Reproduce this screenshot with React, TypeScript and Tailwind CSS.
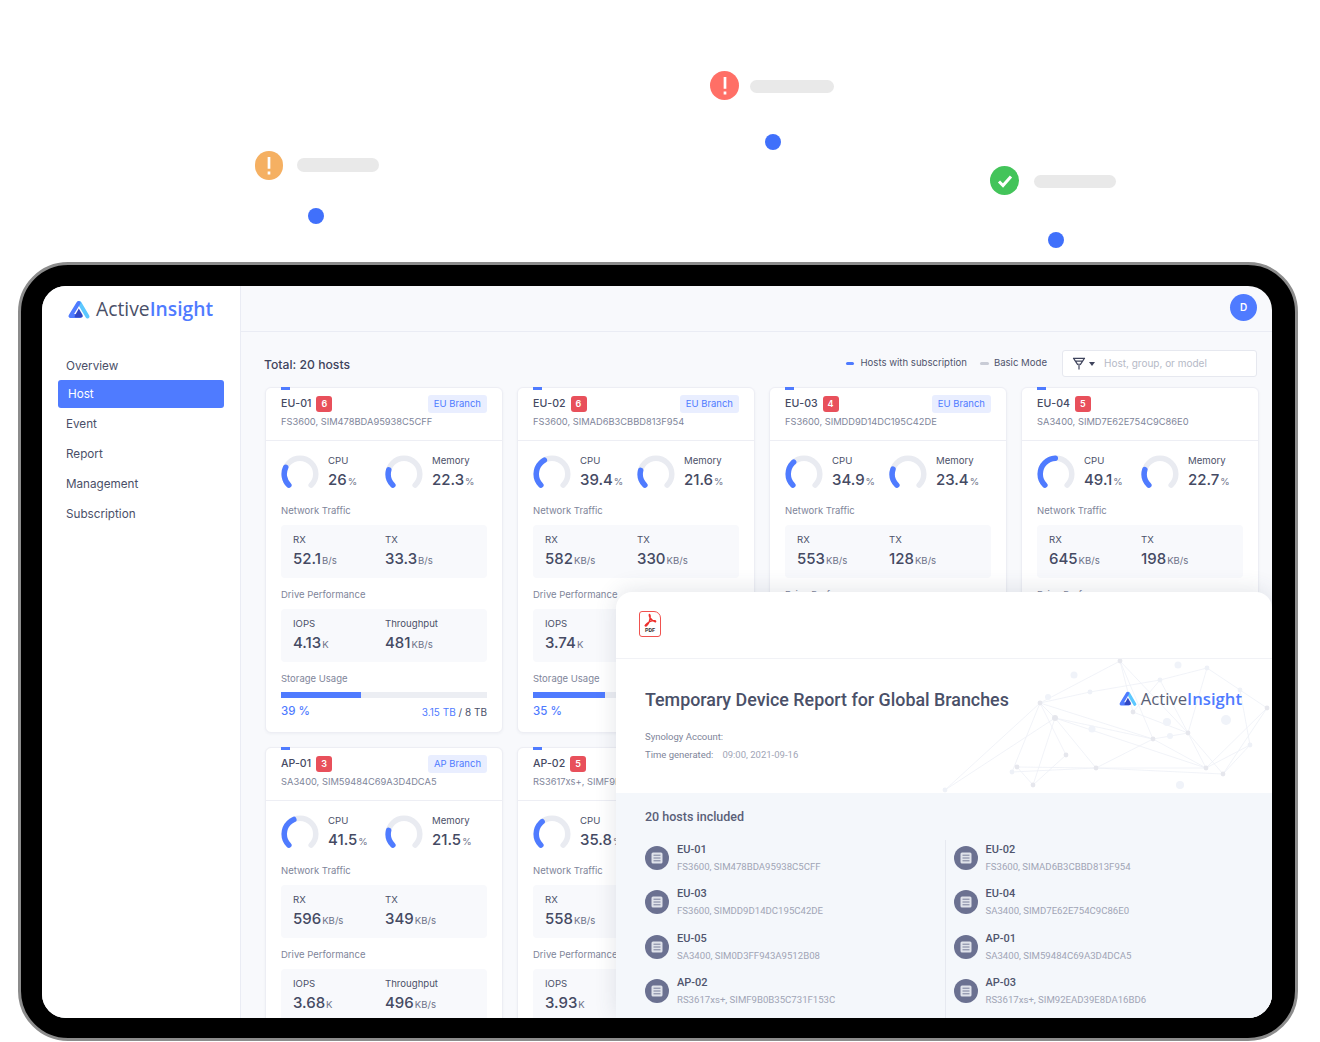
import React from "react";

type Host = {
  name: string;
  count: number;
  branch?: string;
  model: string;
  cpu: number;
  mem: number;
  rx: string;
  rxUnit: string;
  tx: string;
  iops: string;
  thr: string;
  storage: number;
  used: string;
};

const hosts: Host[] = [
  { name: "EU-01", count: 6, branch: "EU Branch", model: "FS3600, SIM478BDA95938C5CFF", cpu: 26, mem: 22.3, rx: "52.1", rxUnit: "B/s", tx: "33.3", iops: "4.13", thr: "481", storage: 39, used: "3.15 TB" },
  { name: "EU-02", count: 6, branch: "EU Branch", model: "FS3600, SIMAD6B3CBBD813F954", cpu: 39.4, mem: 21.6, rx: "582", rxUnit: "KB/s", tx: "330", iops: "3.74", thr: "467", storage: 35, used: "2.80 TB" },
  { name: "EU-03", count: 4, branch: "EU Branch", model: "FS3600, SIMDD9D14DC195C42DE", cpu: 34.9, mem: 23.4, rx: "553", rxUnit: "KB/s", tx: "128", iops: "3.52", thr: "455", storage: 41, used: "3.28 TB" },
  { name: "EU-04", count: 5, model: "SA3400, SIMD7E62E754C9C86E0", cpu: 49.1, mem: 22.7, rx: "645", rxUnit: "KB/s", tx: "198", iops: "3.90", thr: "472", storage: 37, used: "2.96 TB" },
  { name: "AP-01", count: 3, branch: "AP Branch", model: "SA3400, SIM59484C69A3D4DCA5", cpu: 41.5, mem: 21.5, rx: "596", rxUnit: "KB/s", tx: "349", iops: "3.68", thr: "496", storage: 33, used: "2.64 TB" },
  { name: "AP-02", count: 5, branch: "AP Branch", model: "RS3617xs+, SIMF9B0B35C731F153C", cpu: 35.8, mem: 22.1, rx: "558", rxUnit: "KB/s", tx: "301", iops: "3.93", thr: "488", storage: 30, used: "2.40 TB" },
];

const reportHosts = [
  ["EU-01", "FS3600, SIM478BDA95938C5CFF", "EU-02", "FS3600, SIMAD6B3CBBD813F954"],
  ["EU-03", "FS3600, SIMDD9D14DC195C42DE", "EU-04", "SA3400, SIMD7E62E754C9C86E0"],
  ["EU-05", "SA3400, SIM0D3FF943A9512B08", "AP-01", "SA3400, SIM59484C69A3D4DCA5"],
  ["AP-02", "RS3617xs+, SIMF9B0B35C731F153C", "AP-03", "RS3617xs+, SIM92EAD39E8DA16BD6"],
];

const navItems = ["Overview", "Host", "Event", "Report", "Management", "Subscription"];

const LogoMark = ({ className }: { className: string }) => (
  <svg viewBox="0 0 24 20" className={className}>
    <path d="M12.5 3 L20.5 16.5" stroke="#5cc8ff" strokeWidth="4" strokeLinecap="round" fill="none" />
    <path d="M11.5 3 L3.5 16 H13" stroke="#4f7bff" strokeWidth="4" strokeLinecap="round" strokeLinejoin="round" fill="none" />
    <path d="M11.8 8.5 L15.6 15 Q16.2 17.5 14 17.5 H8.5 Q7 17.5 7.8 15.8 Z" fill="#3148c4" />
  </svg>
);

const Gauge = ({ value }: { value: number }) => (
  <svg viewBox="0 0 38 38" className="w-[38px] h-[38px] shrink-0">
    <g transform="rotate(135 19 19)" fill="none" strokeWidth="5.5" strokeLinecap="round">
      <circle cx="19" cy="19" r="15.8" stroke="#e9ebf1" pathLength={100} strokeDasharray="75 100" />
      <circle cx="19" cy="19" r="15.8" stroke="#4f7bff" pathLength={100} strokeDasharray={`${value * 0.75} 100`} />
    </g>
  </svg>
);

const Metric = ({ label, value, unit, small }: { label: string; value: string | number; unit: string; small?: boolean }) => (
  <div className={small ? "" : "ml-[9px]"}>
    <div className="text-[9.6px] leading-[12px] text-[#4b5068]">{label}</div>
    <div className="mt-[2px] leading-[20px] text-[#454a63]">
      <span className="text-[15px] font-medium">{value}</span>
      <span className="ml-[1px] text-[9.6px] text-[#6d7288]">{unit}</span>
    </div>
  </div>
);

const StatBox = ({ title, left, right }: { title: string; left: React.ReactNode; right: React.ReactNode }) => (
  <div>
    <div className="text-[9.5px] leading-[14px] text-[#80859a]">{title}</div>
    <div className="mt-[7px] h-[53px] bg-[#f8f9fc] rounded-[4px] px-[12px] pt-[9px] grid grid-cols-[92px_1fr]">
      {left}
      {right}
    </div>
  </div>
);

const HostCard = ({ host }: { host: Host }) => (
  <div className="relative h-[346px] bg-white border border-[#edeef4] rounded-[6px] shadow-[0_1px_3px_rgba(40,50,90,0.05)]">
    <div className="absolute left-[15px] top-[-1px] w-[9px] h-[3px] bg-[#4f7bff]" />
    <div className="h-[53px] px-[15px] pt-[7px] border-b border-[#edeef4]">
      <div className="flex items-center h-[18px]">
        <span className="text-[10.6px] font-medium text-[#454a63]">{host.name}</span>
        <span className="ml-[5px] w-[16px] h-[16px] rounded-[3px] bg-[#e8505b] text-white text-[9px] font-semibold flex items-center justify-center">
          {host.count}
        </span>
        {host.branch && (
          <span className="ml-auto h-[18px] px-[6px] rounded-[3px] bg-[#e9eeff] text-[#4f7bff] text-[9.5px] leading-[18px]">
            {host.branch}
          </span>
        )}
      </div>
      <div className="mt-[2px] text-[9.3px] leading-[14px] text-[#80859a] whitespace-nowrap">{host.model}</div>
    </div>
    <div className="px-[15px] pt-[14px]">
      <div className="grid grid-cols-[104px_1fr] h-[40px]">
        <div className="flex">
          <Gauge value={host.cpu} />
          <Metric label="CPU" value={host.cpu} unit="%" />
        </div>
        <div className="flex">
          <Gauge value={host.mem} />
          <Metric label="Memory" value={host.mem} unit="%" />
        </div>
      </div>
      <div className="mt-[9px]">
        <StatBox
          title="Network Traffic"
          left={<Metric small label="RX" value={host.rx} unit={host.rxUnit} />}
          right={<Metric small label="TX" value={host.tx} unit={host.rxUnit} />}
        />
      </div>
      <div className="mt-[10px]">
        <StatBox
          title="Drive Performance"
          left={<Metric small label="IOPS" value={host.iops} unit="K" />}
          right={<Metric small label="Throughput" value={host.thr} unit="KB/s" />}
        />
      </div>
      <div className="mt-[10px] text-[9.5px] leading-[14px] text-[#80859a]">Storage Usage</div>
      <div className="mt-[6px] h-[6px] bg-[#eceef3]">
        <div className="h-full bg-[#4f7bff]" style={{ width: `${host.storage}%` }} />
      </div>
      <div className="mt-[5px] flex items-center justify-between h-[18px]">
        <span className="text-[11.5px] font-medium text-[#4f7bff]">{host.storage} %</span>
        <span className="text-[10px] text-[#4a4f68]">
          <span className="text-[#4f7bff]">{host.used}</span> / 8 TB
        </span>
      </div>
    </div>
  </div>
);

const ServerIcon = () => (
  <span className="w-[24px] h-[24px] rounded-full bg-[#6b7191] flex items-center justify-center shrink-0">
    <svg viewBox="0 0 12 12" className="w-[12px] h-[12px]">
      <rect x="0.5" y="0.5" width="11" height="11" rx="1.5" fill="#dfe2ea" />
      <path d="M2.5 3.2h7M2.5 6h7M2.5 8.8h7" stroke="#7a809c" strokeWidth="1" />
    </svg>
  </span>
);

const ReportRow = ({ name, model }: { name: string; model: string }) => (
  <div className="flex items-center h-[44.3px]">
    <ServerIcon />
    <div className="ml-[8px] font-[Roboto,sans-serif]">
      <div className="text-[11px] leading-[16px] font-medium text-[#50556e]">{name}</div>
      <div className="mt-[2px] text-[9.6px] leading-[14px] text-[#a1a5b6] whitespace-nowrap">{model}</div>
    </div>
  </div>
);

const nodes: [number, number][] = [
  [1040, 703], [1055, 718], [1153, 739], [1188, 733], [1096, 768], [1206, 768], [1223, 774],
  [1066, 755], [1017, 767], [1033, 785], [1133, 712], [1120, 661], [1267, 708], [945, 790], [1012, 772],
  [1207, 668], [1240, 690], [1090, 692], [1160, 680], [1250, 745],
];
const links: [number, number][] = [
  [0, 1], [0, 7], [0, 13], [0, 2], [1, 4], [1, 2], [1, 9], [1, 5], [2, 3], [2, 4], [2, 5], [3, 5], [3, 6],
  [4, 5], [4, 6], [7, 9], [8, 9], [10, 11], [10, 3], [11, 2], [5, 12], [6, 12], [13, 1], [14, 0], [14, 4], [0, 11], [4, 8], [3, 11],
  [15, 16], [15, 3], [16, 12], [17, 0], [17, 18], [18, 15], [18, 3], [16, 19], [19, 5], [19, 6], [10, 18],
];

const NetworkArt = () => (
  <svg viewBox="616 659 656 134" className="absolute inset-0 w-full h-full">
    {links.map(([a, b], i) => (
      <line key={i} x1={nodes[a][0]} y1={nodes[a][1]} x2={nodes[b][0]} y2={nodes[b][1]} stroke="#edf0f6" strokeWidth="0.8" />
    ))}
    {nodes.map(([x, y], i) => (
      <circle key={i} cx={x} cy={y} r={i === 1 ? 3 : 2.4} fill={i > 12 ? "#eef1f7" : "#e6e7ed"} />
    ))}
    <g fill="#f0f3f9">
      <circle cx="1074" cy="675" r="3.5" /><circle cx="1048" cy="697" r="3" /><circle cx="1167" cy="722" r="4" />
      <circle cx="1226" cy="720" r="5" /><circle cx="1178" cy="665" r="3.5" />
      <circle cx="1092" cy="729" r="3.5" /><circle cx="1170" cy="736" r="3" /><circle cx="1180" cy="785" r="4" />
    </g>
  </svg>
);

const PdfIcon = () => (
  <div className="relative w-[22px] h-[26px] border-[1.5px] border-[#f0524f] rounded-[3px] rounded-tr-[7px] flex flex-col items-center bg-white">
    <svg viewBox="0 0 24 24" className="w-[14px] h-[14px] mt-[1px]" fill="none" stroke="#ee2f2c" strokeWidth="2.4">
      <path d="M11 3c-1 3 3 10 10 12 1 0 1-2-1-2-5 0-12 3-16 8-1 1 1 2 2 1 4-4 7-11 6-18-.2-1-1-2-1-1z" />
    </svg>
    <span className="text-[5.5px] leading-[6px] font-bold text-[#333]">PDF</span>
  </div>
);

const Dot = ({ className }: { className: string }) => (
  <span className={`absolute w-[16px] h-[16px] rounded-full bg-[#4070fb] ${className}`} />
);

export default function App() {
  return (
    <div className="relative w-[1320px] h-[1042px] bg-white overflow-hidden font-[Inter,sans-serif]">
      {/* floating alerts above the device */}
      <div className="relative h-[262px]">
        <span className="absolute left-[255px] top-[151px] w-[28px] h-[29px] rounded-full bg-[#f5b062] flex items-center justify-center">
          <svg viewBox="0 0 4 20" className="w-[4px] h-[18px]"><path d="M0.5 0h3v13h-3zM0.5 16h3v3.5h-3z" fill="#fff" /></svg>
        </span>
        <span className="absolute left-[297px] top-[158px] w-[82px] h-[14px] rounded-full bg-[#e9e9e9]" />
        <Dot className="left-[308px] top-[208px]" />
        <span className="absolute left-[710px] top-[71px] w-[29px] h-[29px] rounded-full bg-[#ff6f66] flex items-center justify-center">
          <svg viewBox="0 0 4 20" className="w-[4px] h-[18px]"><path d="M0.5 0h3v13h-3zM0.5 16h3v3.5h-3z" fill="#fff" /></svg>
        </span>
        <span className="absolute left-[750px] top-[80px] w-[84px] h-[13px] rounded-full bg-[#e9e9e9]" />
        <Dot className="left-[765px] top-[134px]" />
        <span className="absolute left-[990px] top-[166px] w-[29px] h-[29px] rounded-full bg-[#43c45a] flex items-center justify-center">
          <svg viewBox="0 0 16 14" className="w-[16px] h-[14px]"><path d="M2 7.5l4 4 8-9" stroke="#fff" strokeWidth="3" fill="none" /></svg>
        </span>
        <span className="absolute left-[1034px] top-[175px] w-[82px] h-[13px] rounded-full bg-[#e9e9e9]" />
        <Dot className="left-[1048px] top-[232px]" />
      </div>

      {/* device frame */}
      <div className="ml-[18px] w-[1280px] h-[779px] rounded-[50px] border-[3px] border-[#8c8c8c] bg-black pl-[21px] pr-[23px] pt-[21px] pb-[20px]">
        <div className="relative w-full h-full rounded-[24px] overflow-hidden bg-[#f8f9fc] flex">
          {/* sidebar */}
          <div className="w-[199px] shrink-0 bg-white border-r border-[#eaecf4]">
            <div className="h-[66px] pl-[25px] pt-[11px] flex items-start">
              <LogoMark className="w-[24px] h-[20px] mt-[3px]" />
              <div className="ml-[5px] text-[19.3px] leading-[24px] font-['Open_Sans',sans-serif] text-[#4a4f68]">
                Active<span className="font-semibold text-[#4f7bff]">Insight</span>
              </div>
            </div>
            <nav className="mx-[16px]">
              {navItems.map((item) =>
                item === "Host" ? (
                  <div key={item} className="h-[28px] mb-[2px] px-[10px] rounded-[3px] bg-[#4f7bff] text-white text-[11.7px] leading-[28px] w-[166px]">
                    {item}
                  </div>
                ) : (
                  <div key={item} className="h-[28px] mb-[2px] last:mb-0 px-[8px] text-[#4a4f68] text-[11.7px] leading-[28px] first:mb-0">
                    {item}
                  </div>
                )
              )}
            </nav>
          </div>

          {/* main */}
          <div className="flex-1 min-w-0">
            <div className="h-[46px] border-b border-[#eaecf4] flex items-center justify-end pr-[15px] pb-[2px]">
              <span className="w-[27px] h-[27px] rounded-full bg-[#4f7bff] text-white text-[10px] font-semibold flex items-center justify-center">D</span>
            </div>
            <div className="pl-[24px]">
              <div className="h-[27px] mt-[18px] mb-[10px] flex items-center pr-[15px]">
                <span className="text-[12.2px] font-medium text-[#3f445c] mt-[3px] -ml-[1px]">Total: 20 hosts</span>
                <span className="ml-auto w-[8px] h-[3px] rounded-full bg-[#4f7bff]" />
                <span className="ml-[6px] text-[9.6px] text-[#4f546c]">Hosts with subscription</span>
                <span className="ml-[13px] w-[9px] h-[3px] rounded-full bg-[#c9ccd6]" />
                <span className="ml-[5px] text-[9.6px] text-[#4f546c]">Basic Mode</span>
                <div className="ml-[15px] w-[195px] h-[27px] bg-white border border-[#e6e8ef] rounded-[3px] flex items-center pl-[9px]">
                  <svg viewBox="0 0 14 14" className="w-[14px] h-[13px]" fill="none" stroke="#3f445c" strokeWidth="1.3">
                    <path d="M0.5 1.5h13M3 4.5h8M7 7v6.5M5.8 8.5 1.5 2m6.7 6.5L12.5 2" />
                  </svg>
                  <svg viewBox="0 0 6 4" className="w-[6px] h-[4px] ml-[3px]"><path d="M0 0h6L3 4z" fill="#3f445c" /></svg>
                  <span className="ml-[9px] text-[10px] text-[#b5b9c6]">Host, group, or model</span>
                </div>
              </div>
              <div className="grid grid-cols-[repeat(4,238px)] gap-[14px]">
                {hosts.map((host) => (
                  <HostCard key={host.name} host={host} />
                ))}
              </div>
            </div>
          </div>

          {/* report overlay */}
          <div className="absolute right-0 bottom-0 w-[656px] h-[426px] rounded-t-[16px] bg-white shadow-[0_-2px_22px_rgba(60,70,100,0.14)] overflow-hidden font-[Roboto,sans-serif]">
            <div className="h-[67px] pl-[23px] pt-[19px] border-b border-[#f1f2f6]">
              <PdfIcon />
            </div>
            <div className="relative h-[134px] pl-[29px]">
              <NetworkArt />
              <div className="relative flex items-center pt-[29px] pr-[30px]">
                <span className="text-[17.85px] leading-[24px] font-medium text-[#4a5068]">Temporary Device Report for Global Branches</span>
                <span className="ml-auto flex items-center -mt-[2px]">
                  <LogoMark className="w-[20px] h-[16px]" />
                  <span className="ml-[3px] text-[16.7px] leading-[22px] font-['Open_Sans',sans-serif] text-[#5a5f76]">
                    Active<span className="font-semibold text-[#4f7bff]">Insight</span>
                  </span>
                </span>
              </div>
              <div className="relative mt-[16px] text-[9.5px] leading-[18px] text-[#80859a]">
                <div>Synology Account:</div>
                <div>
                  Time generated:<span className="ml-[9px] text-[#a1a5b6]">09:00, 2021-09-16</span>
                </div>
              </div>
            </div>
            <div className="h-[225px] bg-[#f4f7fb] pl-[29px] pt-[16px]">
              <div className="text-[12.5px] leading-[16px] font-medium text-[#5a5f78]">20 hosts included</div>
              <div className="relative mt-[11px] grid grid-cols-[308.5px_1fr]">
                <div className="absolute left-[300px] top-[4px] bottom-[-20px] w-px bg-[#e6e9f0]" />
                {reportHosts.map(([a, am, b, bm]) => (
                  <React.Fragment key={a}>
                    <ReportRow name={a} model={am} />
                    <ReportRow name={b} model={bm} />
                  </React.Fragment>
                ))}
              </div>
            </div>
          </div>
        </div>
      </div>
    </div>
  );
}
